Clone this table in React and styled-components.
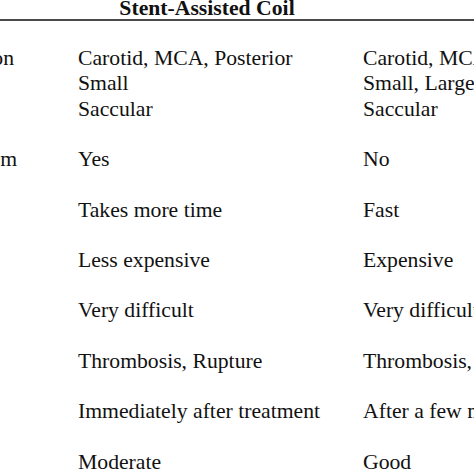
import React from "react";
import styled, { createGlobalStyle } from "styled-components";

const GlobalStyle = createGlobalStyle`
  html, body {
    margin: 0;
    padding: 0;
    background: #ffffff;
    overflow: hidden;
  }
  body {
    width: 474px;
    height: 474px;
  }
`;

const Page = styled.div`
  width: 474px;
  height: 474px;
  overflow: hidden;
  background: #ffffff;
  color: #111111;
  font-family: "Liberation Serif", "Times New Roman", serif;
  font-size: 21.7px;
`;

const Table = styled.div`
  display: grid;
  grid-template-columns: 160px 285px 320px;
  margin-left: -82px;
  margin-top: -3px;
  width: 765px;
`;

const HeadRow = styled.div`
  grid-column: 1 / -1;
  display: grid;
  grid-template-columns: subgrid;
  height: 22px;
  border-bottom: 2px solid #4a4a4a;
`;

const HeadCell = styled.div`
  grid-column: 2;
  font-weight: bold;
  line-height: 22px;
  text-align: center;
  padding-right: 27px;
  white-space: nowrap;
`;

const Body = styled.div`
  grid-column: 1 / -1;
  display: grid;
  grid-template-columns: subgrid;
  row-gap: 25px;
  padding-top: 25px;
`;

const Row = styled.div`
  grid-column: 1 / -1;
  display: grid;
  grid-template-columns: subgrid;
`;

const Label = styled.div`
  display: flex;
  justify-content: flex-end;
  padding-right: ${(p) => p.$end}px;
  line-height: 25.4px;
  white-space: nowrap;
`;

const Cell = styled.div`
  display: flex;
  flex-direction: column;
  line-height: 25.4px;
  white-space: nowrap;
`;

const rows = [
  {
    label: "Location",
    end: 64,
    stent: ["Carotid, MCA, Posterior", "Small", "Saccular"],
    other: ["Carotid, MCA, Posterior", "Small, Large", "Saccular"],
  },
  { label: "Dual antiplatelet m", end: 61, stent: ["Yes"], other: ["No"] },
  { label: "", end: 0, stent: ["Takes more time"], other: ["Fast"] },
  { label: "", end: 0, stent: ["Less expensive"], other: ["Expensive"] },
  { label: "", end: 0, stent: ["Very difficult"], other: ["Very difficult"] },
  { label: "", end: 0, stent: ["Thrombosis, Rupture"], other: ["Thrombosis, Rupture"] },
  {
    label: "",
    end: 0,
    stent: ["Immediately after treatment"],
    other: ["After a few months"],
  },
  { label: "", end: 0, stent: ["Moderate"], other: ["Good"] },
];

const App = () => {
  return (
    <Page>
      <GlobalStyle />
      <Table>
        <HeadRow>
          <HeadCell>Stent-Assisted Coil</HeadCell>
        </HeadRow>
        <Body>
          {rows.map((row, i) => (
            <Row key={i}>
              <Label $end={row.end}>
                <span>{row.label}</span>
              </Label>
              <Cell>
                {row.stent.map((line) => (
                  <span key={line}>{line}</span>
                ))}
              </Cell>
              <Cell>
                {row.other.map((line) => (
                  <span key={line}>{line}</span>
                ))}
              </Cell>
            </Row>
          ))}
        </Body>
      </Table>
    </Page>
  );
};

export default App;
